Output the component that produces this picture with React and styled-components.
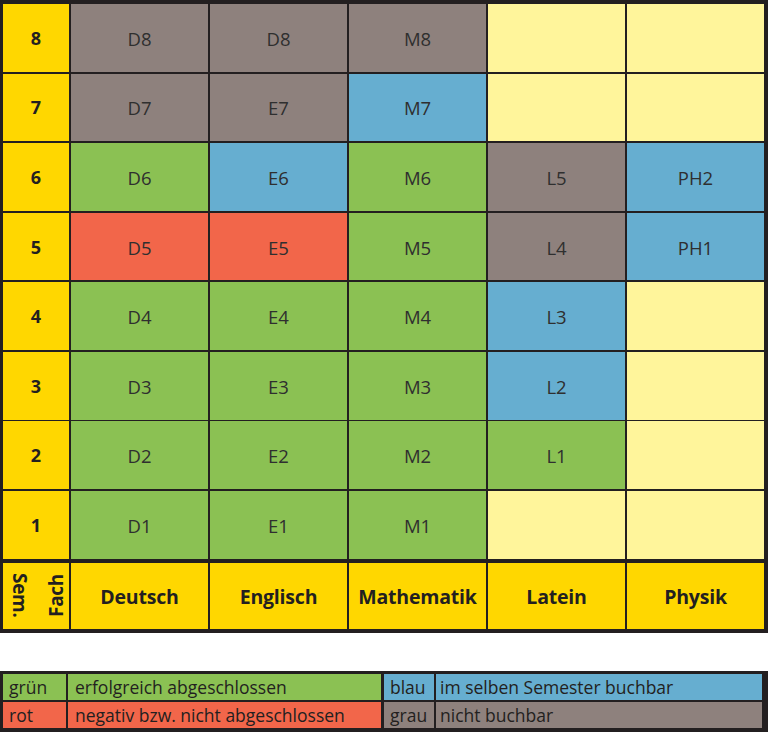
import React from 'react'
import styled, { createGlobalStyle } from 'styled-components'

const GlobalStyle = createGlobalStyle`
  html, body {
    margin: 0;
    padding: 0;
    background: #fff;
  }
  body {
    font-family: "Open Sans", "Liberation Sans", sans-serif;
    color: #231f20;
  }
`

const colors = {
  g: '#8bc153',
  b: '#66aed0',
  r: '#f2664a',
  x: '#8e817d',
  y: '#fff59b',
}

const Page = styled.div`
  width: 768px;
  height: 732px;
  overflow: hidden;
  display: flex;
  flex-direction: column;
`

const Table = styled.div`
  background: #231f20;
  padding: 4px 4px 4px 3px;
  display: flex;
  flex-direction: column;
  gap: 4px;
`

const Grid = styled.div`
  display: grid;
  grid-template-columns: 66px repeat(5, 1fr);
  grid-auto-rows: ${p => p.$rowHeight};
  column-gap: 2px;
  row-gap: 1.9px;
`

const SemCell = styled.div`
  background: #ffd700;
  display: flex;
  align-items: center;
  justify-content: center;
  font-weight: 700;
  font-size: 18px;
  color: #231f20;
`

const Cell = styled.div`
  background: ${p => colors[p.$c]};
  display: flex;
  align-items: center;
  justify-content: center;
  font-size: 18.5px;
  color: #2f2f2f;
  padding-top: 1px;
`

const HeadCell = styled.div`
  background: #ffd700;
  display: flex;
  align-items: center;
  justify-content: center;
  font-weight: 700;
  font-size: 19.5px;
  letter-spacing: -0.2px;
  color: #231f20;
  padding-top: 2px;
`

const Corner = styled.div`
  background: #ffd700;
  display: flex;
  align-items: center;
  justify-content: space-between;
  padding: 0 3px 0 7px;
  font-weight: 700;
  font-size: 19px;
  letter-spacing: -0.3px;
  color: #231f20;
`

const Vertical = styled.span`
  writing-mode: vertical-rl;
  line-height: 1;
  transform: ${p => (p.$up ? 'rotate(180deg)' : 'none')};
`

const Legend = styled.div`
  margin-top: 38px;
  background: #231f20;
  padding: 3px 5px 4px 3px;
  display: grid;
  grid-template-columns: 63px 313px 51px 326px;
  grid-auto-rows: 26px;
  column-gap: 2px;
  row-gap: 2px;
`

const LegendCell = styled.div`
  background: ${p => colors[p.$c]};
  display: flex;
  align-items: center;
  padding: 0 0 0 ${p => p.$pad || 6}px;
  margin-left: ${p => (p.$gap ? 1 : 0)}px;
  font-size: 17.5px;
  color: #231f20;
  white-space: nowrap;
  overflow: hidden;
`

const rows = [
  [8, ['D8', 'x'], ['D8', 'x'], ['M8', 'x'], ['', 'y'], ['', 'y']],
  [7, ['D7', 'x'], ['E7', 'x'], ['M7', 'b'], ['', 'y'], ['', 'y']],
  [6, ['D6', 'g'], ['E6', 'b'], ['M6', 'g'], ['L5', 'x'], ['PH2', 'b']],
  [5, ['D5', 'r'], ['E5', 'r'], ['M5', 'g'], ['L4', 'x'], ['PH1', 'b']],
  [4, ['D4', 'g'], ['E4', 'g'], ['M4', 'g'], ['L3', 'b'], ['', 'y']],
  [3, ['D3', 'g'], ['E3', 'g'], ['M3', 'g'], ['L2', 'b'], ['', 'y']],
  [2, ['D2', 'g'], ['E2', 'g'], ['M2', 'g'], ['L1', 'g'], ['', 'y']],
  [1, ['D1', 'g'], ['E1', 'g'], ['M1', 'g'], ['', 'y'], ['', 'y']],
]

const subjects = ['Deutsch', 'Englisch', 'Mathematik', 'Latein', 'Physik']

const App = () => {
  return (
    <Page>
      <GlobalStyle />
      <Table>
        <Grid $rowHeight="67.7px">
          {rows.map(([sem, ...cells]) => (
            <React.Fragment key={sem}>
              <SemCell>{sem}</SemCell>
              {cells.map(([label, c], i) => (
                <Cell key={i} $c={c}>{label}</Cell>
              ))}
            </React.Fragment>
          ))}
        </Grid>
        <Grid $rowHeight="66px">
          <Corner>
            <Vertical>Sem.</Vertical>
            <Vertical $up>Fach</Vertical>
          </Corner>
          {subjects.map(s => (
            <HeadCell key={s}>{s}</HeadCell>
          ))}
        </Grid>
      </Table>
      <Legend>
        <LegendCell $c="g">grün</LegendCell>
        <LegendCell $c="g" $pad={7}>erfolgreich abgeschlossen</LegendCell>
        <LegendCell $c="b" $gap>blau</LegendCell>
        <LegendCell $c="b" $pad={4}>im selben Semester buchbar</LegendCell>
        <LegendCell $c="r">rot</LegendCell>
        <LegendCell $c="r" $pad={7}>negativ bzw. nicht abgeschlossen</LegendCell>
        <LegendCell $c="x" $gap>grau</LegendCell>
        <LegendCell $c="x" $pad={4}>nicht buchbar</LegendCell>
      </Legend>
    </Page>
  )
}

export default App
